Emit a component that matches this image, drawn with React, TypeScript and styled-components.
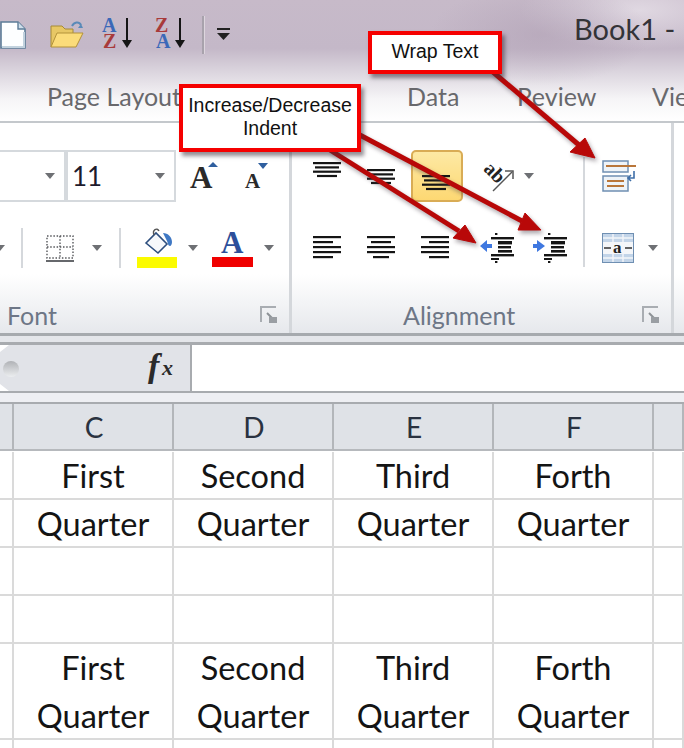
import React from "react";
import styled, { createGlobalStyle } from "styled-components";

const Global = createGlobalStyle`
  html, body { margin: 0; padding: 0; background: #fff; }
`;

const Page = styled.div`
  position: relative;
  width: 684px;
  height: 748px;
  overflow: hidden;
  background: #fff;
  font-family: Lato, "Open Sans", sans-serif;
`;

const TitleArea = styled.header`
  height: 123px;
  box-sizing: border-box;
  border-bottom: 2px solid #c4c8cc;
  display: flex;
  flex-direction: column;
  background:
    radial-gradient(ellipse 110px 50px at 540px 35px, rgba(176, 160, 180, 0.55), rgba(176, 160, 180, 0) 100%),
    radial-gradient(ellipse 120px 40px at 640px 10px, rgba(232, 226, 234, 0.75), rgba(232, 226, 234, 0) 100%),
    linear-gradient(180deg, #c7bac9 0%, #c4b8c8 40%, #dcd6df 60%, #f6f5f7 82%, #ffffff 100%);
`;

const QuickBar = styled.div`
  height: 76px;
  display: flex;
  align-items: flex-start;
  padding-top: 18px;
  box-sizing: border-box;
`;

const QuickSlot = styled.div<{ $w: number; $top?: number }>`
  width: ${(p) => p.$w}px;
  flex: none;
  display: flex;
  justify-content: flex-start;
  padding-top: ${(p) => p.$top ?? 0}px;
`;

const QuickDivider = styled.div`
  width: 3px;
  height: 38px;
  margin: -2px 11px 0 0;
  background: #a8a2ac;
  border-right: 1px solid #ddd6de;
  box-sizing: border-box;
`;

const BookTitle = styled.div`
  margin-left: 342px;
  margin-top: -5px;
  font-size: 29px;
  line-height: 32px;
  color: #333338;
  white-space: nowrap;
  font-family: Lato, sans-serif;
`;

const TabRow = styled.nav`
  display: flex;
  padding-left: 47px;
  height: 40px;
  align-items: center;
`;

const Tab = styled.div<{ $w: number }>`
  width: ${(p) => p.$w}px;
  flex: none;
  font-size: 25px;
  line-height: 30px;
  color: #68686c;
  white-space: nowrap;
  overflow: visible;
`;

const Ribbon = styled.section`
  height: 213px;
  display: flex;
  background: linear-gradient(180deg, #ffffff 0%, #ffffff 72%, #e6e8ec 100%);
  border-bottom: 3px solid #a6aaae;
  box-sizing: border-box;
`;

const Group = styled.div<{ $w: number }>`
  width: ${(p) => p.$w}px;
  flex: none;
  box-sizing: border-box;
  border-right: 3px solid #d4d7db;
  display: flex;
  flex-direction: column;
  padding-top: 27px;
`;

const ToolRow = styled.div`
  display: flex;
  align-items: center;
  height: 52px;
  flex: none;
`;

const RowGap = styled.div`
  height: 20px;
  flex: none;
`;

const AlignBody = styled.div`
  display: flex;
  align-items: center;
`;

const ToolColumn = styled.div<{ $w: number }>`
  width: ${(p) => p.$w}px;
  flex: none;
  display: flex;
  flex-direction: column;
`;

const Combo = styled.div<{ $w: number; $noLeft?: boolean }>`
  width: ${(p) => p.$w}px;
  height: 52px;
  box-sizing: border-box;
  border: 2px solid #d5d9dd;
  border-left-width: ${(p) => (p.$noLeft ? 0 : 2)}px;
  display: flex;
  align-items: center;
  justify-content: space-between;
  padding: 0 9px 0 4px;
  font-size: 26px;
  color: #1d1a2c;
  flex: none;
`;

const Slot = styled.div<{ $w: number; $top?: number }>`
  width: ${(p) => p.$w}px;
  height: 52px;
  flex: none;
  display: flex;
  align-items: ${(p) => (p.$top !== undefined ? "flex-start" : "center")};
  padding-top: ${(p) => p.$top ?? 0}px;
  justify-content: center;
  box-sizing: border-box;
`;

const VSep = styled.div<{ $h?: number }>`
  width: 2px;
  height: ${(p) => p.$h ?? 40}px;
  background: #d5d8dc;
  flex: none;
`;

const Caret = styled.span<{ $clip?: number }>`
  width: 0;
  height: 0;
  flex: none;
  margin-left: ${(p) => (p.$clip ? -p.$clip : 0)}px;
  border-left: 5px solid transparent;
  border-right: 5px solid transparent;
  border-top: 6px solid #6e7074;
`;

const GroupFooter = styled.div`
  margin-top: auto;
  height: 36px;
  padding: 0 11px 0 7px;
  display: flex;
  align-items: center;
  justify-content: space-between;
  font-size: 25px;
  color: #6d7686;
`;

const AlignLabel = styled.span`
  margin-left: 104px;
`;

const HighlightButton = styled.div`
  width: 52px;
  height: 52px;
  flex: none;
  box-sizing: border-box;
  border: 2px solid #d9ac55;
  border-radius: 5px;
  background: linear-gradient(180deg, #fde9a4 0%, #fdd873 100%);
  display: flex;
  align-items: flex-start;
  justify-content: center;
  padding-top: 23px;
`;

const FormulaGap = styled.div`
  height: 6px;
  background: #e4e6ea;
  border-bottom: 3px solid #a8abaf;
`;

const FormulaBar = styled.div`
  height: 48px;
  display: flex;
  box-sizing: border-box;
  border-bottom: 2px solid #a8abaf;
`;

const NameEnd = styled.div`
  width: 192px;
  flex: none;
  box-sizing: border-box;
  background: #e1e3e8;
  border-right: 2px solid #a8abaf;
  display: flex;
  align-items: center;
  justify-content: space-between;
  padding: 0 12px 0 0;
`;

const FormulaInput = styled.div`
  flex: 1;
  background: #fff;
`;

const SheetGap = styled.div`
  height: 9px;
  background: #eeeff3;
  border-bottom: 2px solid #a8abaf;
`;

const Sheet = styled.div`
  display: grid;
  grid-template-columns: 14px repeat(4, 160px) 1fr;
  grid-auto-rows: 48px;
`;

const HeadCell = styled.div`
  box-sizing: border-box;
  background: #dfe2e7;
  border-right: 2px solid #b3b6ba;
  border-bottom: 2px solid #b6b9bd;
  display: flex;
  align-items: center;
  justify-content: center;
  padding-left: 2px;
  font-size: 28px;
  color: #2a3240;
  height: 47px;
`;

const Cell = styled.div<{ $span?: number }>`
  box-sizing: border-box;
  grid-row: span ${(p) => p.$span ?? 1};
  border-right: 2px solid #dadada;
  border-bottom: 2px solid #dadada;
  font-size: 32.5px;
  line-height: 48px;
  color: #141414;
  text-align: center;
  white-space: pre-line;
  min-width: 0;
`;

const Callout = styled.div<{ $x: number; $y: number; $w: number; $h: number }>`
  position: absolute;
  left: ${(p) => p.$x}px;
  top: ${(p) => p.$y}px;
  width: ${(p) => p.$w}px;
  height: ${(p) => p.$h}px;
  box-sizing: border-box;
  border: 4px solid #f50000;
  background: #fff;
  box-shadow: 3px 4px 4px rgba(60, 50, 60, 0.55);
  font-family: "Liberation Sans", Arial, sans-serif;
  font-size: 19.5px;
  line-height: 23px;
  color: #111;
  text-align: center;
  display: flex;
  align-items: center;
  justify-content: center;
  padding-bottom: 3px;
`;

const ArrowLayer = styled.svg`
  position: absolute;
  left: 0;
  top: 0;
  filter: drop-shadow(2px 3px 2px rgba(70, 60, 70, 0.45));
  pointer-events: none;
`;

const Icon = styled.svg`
  display: block;
  flex: none;
  overflow: visible;
`;

const Lines = ({ rows, gap }: { rows: [number, number][]; gap: number }) => (
  <Icon width="30" height={rows.length * gap} viewBox={`0 0 30 ${rows.length * gap}`}>
    {rows.map(([a, b], i) => (
      <rect key={i} x={a} y={i * gap} width={b - a} height="2.2" fill="#151515" />
    ))}
  </Icon>
);

const DocIcon = () => (
  <Icon width="26" height="30" viewBox="0 0 26 30">
    <path d="M1 2h17l7 7v19H1z" fill="#fdfeff" stroke="#5c7c98" strokeWidth="1.6" />
    <path d="M18 2v7h7" fill="#cfdeea" stroke="#5c7c98" strokeWidth="1.4" />
    <path d="M2 27h22V12" fill="none" stroke="#c2d2de" strokeWidth="2" />
  </Icon>
);

const FolderIcon = () => (
  <Icon width="34" height="28" viewBox="0 0 34 28">
    <path d="M1 27V6h11l3 3h8v5" fill="#e7c765" stroke="#a58a38" />
    <path d="M1 27l6-14h26l-7 14z" fill="#fbdc7a" stroke="#b3923a" />
    <path d="M22 6c2-4 7-5 9-1" fill="none" stroke="#5a8ab8" strokeWidth="2" />
    <path d="M33 8l-5 0 3-4z" fill="#5a8ab8" />
  </Icon>
);

const SortIcon = ({ top, bottom, topColor, bottomColor }: { top: string; bottom: string; topColor: string; bottomColor: string }) => (
  <Icon width="34" height="32" viewBox="0 0 34 32">
    <text x="0" y="14" fontFamily="Liberation Serif, serif" fontWeight="700" fontSize="20" fill={topColor}>{top}</text>
    <text x="1" y="30" fontFamily="Liberation Serif, serif" fontWeight="700" fontSize="20" fill={bottomColor}>{bottom}</text>
    <path d="M25 0v24" stroke="#151515" strokeWidth="2" />
    <path d="M20 22h10l-5 8z" fill="#151515" />
  </Icon>
);

const CustomizeIcon = () => (
  <Icon width="16" height="14" viewBox="0 0 16 14">
    <rect x="1" y="0" width="13" height="2" fill="#222" />
    <path d="M1 5h13l-6.5 7z" fill="#222" />
  </Icon>
);

const GrowIcon = () => (
  <Icon width="32" height="32" viewBox="0 0 32 32">
    <text x="0" y="28" fontFamily="Liberation Serif, serif" fontWeight="700" fontSize="31" fill="#2a2a2a">A</text>
    <path d="M18 7h10l-5-5z" fill="#2f5f9f" />
  </Icon>
);

const ShrinkIcon = () => (
  <Icon width="32" height="32" viewBox="0 0 32 32">
    <text x="2" y="28" fontFamily="Liberation Serif, serif" fontWeight="700" fontSize="21" fill="#2a2a2a">A</text>
    <path d="M15 3h10l-5 6z" fill="#2f5f9f" />
  </Icon>
);

const BordersIcon = () => (
  <Icon width="28" height="27" viewBox="0 0 28 27">
    <rect x="1" y="1" width="26" height="22" fill="none" stroke="#55575b" strokeWidth="1.4" strokeDasharray="1.5 1.7" />
    <path d="M14 1v22M1 12h26" stroke="#55575b" strokeWidth="1.4" strokeDasharray="1.5 1.7" />
    <rect x="0" y="25" width="28" height="2" fill="#66686c" />
  </Icon>
);

const FillIcon = () => (
  <Icon width="40" height="42" viewBox="0 0 40 42">
    <path d="M9 16L19 6l11 11-9 9z" fill="#f6f8fb" stroke="#2d4e7e" strokeWidth="1.6" />
    <path d="M17 8c-2-5 3-8 5-4" fill="none" stroke="#555" strokeWidth="1.4" />
    <path d="M26 6c5 0 9 4 9 9 0 2-1 4-2 4-2 0-2-3-3-5z" fill="#3f78c4" />
    <rect x="0" y="30" width="40" height="11" fill="#fbfb00" />
  </Icon>
);

const FontColorIcon = () => (
  <Icon width="41" height="42" viewBox="0 0 41 42">
    <text x="9" y="26" fontFamily="Liberation Serif, serif" fontWeight="700" fontSize="31" fill="#2d4f9a">A</text>
    <rect x="0" y="30" width="41" height="10" fill="#f00000" />
  </Icon>
);

const OrientationIcon = () => (
  <Icon width="32" height="32" viewBox="0 0 32 32">
    <g transform="rotate(45 12 14)">
      <text x="1" y="19" fontFamily="Liberation Serif, serif" fontWeight="700" fontSize="20" fill="#222">ab</text>
    </g>
    <path d="M11 31L30 12" stroke="#555" strokeWidth="1.5" />
    <path d="M23 11h8v8" fill="none" stroke="#555" strokeWidth="1.5" />
  </Icon>
);

const IndentIcon = ({ increase }: { increase: boolean }) => (
  <Icon width="34" height="30" viewBox="0 0 34 30">
    <g fill="#151515">
      <rect x="15" y="0" width="2.4" height="2" />
      <rect x="11" y="4" width="23" height="2.4" />
      <rect x="18" y="8" width="14" height="3.4" />
      <rect x="18" y="13" width="13" height="2.4" />
      <rect x="18" y="17" width="14" height="2.6" />
      <rect x="11" y="21" width="23" height="2.4" />
      <rect x="11" y="25" width="8" height="2" />
      <rect x="15" y="28" width="2.4" height="2" />
    </g>
    {increase ? (
      <path d="M0 11h4V7l8 6-8 6v-4H0z" fill="#3f78e0" />
    ) : (
      <path d="M12 11H7V7l-7 6 7 6v-4h5z" fill="#3f78e0" />
    )}
  </Icon>
);

const WrapIcon = () => (
  <Icon width="34" height="32" viewBox="0 0 34 32">
    <rect x="1" y="1" width="25" height="11" fill="#eef3f8" stroke="#6f8fb2" strokeWidth="1.5" />
    <rect x="1" y="16" width="25" height="15" fill="#eef3f8" stroke="#6f8fb2" strokeWidth="1.5" />
    <path d="M4 6h30" stroke="#b9763a" strokeWidth="2" />
    <path d="M5 21h17M5 26h17" stroke="#b9763a" strokeWidth="2" />
    <path d="M32 11v7h-5M29 15l-3 3 3 3" fill="none" stroke="#3f6fa8" strokeWidth="1.6" />
  </Icon>
);

const MergeIcon = () => (
  <Icon width="32" height="30" viewBox="0 0 32 30">
    <rect x="0.5" y="0.5" width="31" height="29" fill="#c2d4e8" stroke="#6f8fb2" />
    <rect x="1" y="9" width="30" height="12" fill="#f4f6f9" />
    <path d="M1 5h30M1 25h30M11 1v8M21 1v8M11 21v8M21 21v8" stroke="#f4f6f9" strokeWidth="1.4" />
    <text x="11" y="20" fontFamily="Liberation Serif, serif" fontWeight="700" fontSize="17" fill="#222">a</text>
    <path d="M2 15h7M30 15h-7" stroke="#333" strokeWidth="1.5" />
  </Icon>
);

const NameHandle = () => (
  <Icon width="24" height="46" viewBox="0 0 24 46">
    <defs>
      <linearGradient id="handleDot" x1="0" y1="0" x2="0" y2="1">
        <stop offset="0" stopColor="#b0b2b6" />
        <stop offset="1" stopColor="#eceef0" />
      </linearGradient>
    </defs>
    <path d="M0 0h9L0 7zM0 46h9L0 39z" fill="#fff" />
    <circle cx="11" cy="24" r="8" fill="url(#handleDot)" />
  </Icon>
);

const FxIcon = () => (
  <Icon width="30" height="34" viewBox="0 0 30 34">
    <text x="0" y="26" fontFamily="Liberation Serif, serif" fontStyle="italic" fontWeight="700" fontSize="34" fill="#2b2b2b">f</text>
    <text x="14" y="24" fontFamily="Liberation Serif, serif" fontStyle="italic" fontWeight="700" fontSize="22" fill="#2b2b2b">x</text>
  </Icon>
);

const Launcher = () => (
  <Icon width="18" height="18" viewBox="0 0 18 18">
    <path d="M1 16V1h15" fill="none" stroke="#a9adb2" strokeWidth="2" />
    <path d="M7 7l8 8" stroke="#8d9196" strokeWidth="2" />
    <rect x="9" y="11" width="8" height="6" fill="#9a9ea3" />
  </Icon>
);

const Arrows = () => (
  <ArrowLayer width="684" height="748" viewBox="0 0 684 748">
    <g fill="#b80808" stroke="#b80808">
      <path d="M493 72L579 145" strokeWidth="5" fill="none" />
      <path d="M570 152L585 138L595 158Z" strokeWidth="1" />
      <path d="M330 150L459 231" strokeWidth="5" fill="none" />
      <path d="M453 238L465 225L476 243Z" strokeWidth="1" />
      <path d="M358 134L522 221" strokeWidth="5" fill="none" />
      <path d="M518 230L525 213L541 230Z" strokeWidth="1" />
    </g>
  </ArrowLayer>
);

const headers = ["", "C", "D", "E", "F", ""];
const q = "Quarter";
const sheetRows: { cells: string[]; span?: number }[] = [
  { cells: ["First", "Second", "Third", "Forth"] },
  { cells: [q, q, q, q] },
  { cells: ["", "", "", ""] },
  { cells: ["", "", "", ""] },
  { cells: [`First\n${q}`, `Second\n${q}`, `Third\n${q}`, `Forth\n${q}`], span: 2 },
  { cells: ["", "", "", ""] },
];

const stacked: [number, number][] = [[0, 28], [2, 26], [0, 28], [4, 24]];

export default function App() {
  return (
    <Page>
      <Global />
      <TitleArea>
        <QuickBar>
          <QuickSlot $w={50} $top={2}><DocIcon /></QuickSlot>
          <QuickSlot $w={52} $top={2}><FolderIcon /></QuickSlot>
          <QuickSlot $w={53}><SortIcon top="A" bottom="Z" topColor="#3a68b8" bottomColor="#a83a3a" /></QuickSlot>
          <QuickSlot $w={47}><SortIcon top="Z" bottom="A" topColor="#a83a3a" bottomColor="#3a68b8" /></QuickSlot>
          <QuickDivider />
          <QuickSlot $w={16} $top={10}><CustomizeIcon /></QuickSlot>
          <BookTitle>Book1 -</BookTitle>
        </QuickBar>
        <TabRow>
          <Tab $w={360}>Page Layout</Tab>
          <Tab $w={110}>Data</Tab>
          <Tab $w={135}>Review</Tab>
          <Tab $w={32}>View</Tab>
        </TabRow>
      </TitleArea>
      <Ribbon>
        <Group $w={292}>
          <ToolRow>
            <Combo $w={66} $noLeft><span /><Caret /></Combo>
            <Combo $w={110}>11<Caret /></Combo>
            <Slot $w={14} />
            <GrowIcon />
            <Slot $w={21} />
            <ShrinkIcon />
          </ToolRow>
          <RowGap />
          <ToolRow>
            <Caret $clip={5} />
            <Slot $w={16} />
            <VSep />
            <Slot $w={23} />
            <BordersIcon />
            <Slot $w={18} />
            <Caret />
            <Slot $w={17} />
            <VSep />
            <Slot $w={16} />
            <FillIcon />
            <Slot $w={11} />
            <Caret />
            <Slot $w={14} />
            <FontColorIcon />
            <Slot $w={11} />
            <Caret />
          </ToolRow>
          <GroupFooter>Font<Launcher /></GroupFooter>
        </Group>
        <Group $w={382}>
          <AlignBody>
            <ToolColumn $w={291}>
              <ToolRow>
                <Slot $w={9} />
                <Slot $w={54} $top={12}><Lines rows={stacked} gap={4.3} /></Slot>
                <Slot $w={54} $top={19}><Lines rows={stacked} gap={4.3} /></Slot>
                <Slot $w={2} />
                <HighlightButton><Lines rows={stacked} gap={4.3} /></HighlightButton>
                <Slot $w={19} />
                <OrientationIcon />
                <Slot $w={10} />
                <Caret />
              </ToolRow>
              <RowGap />
              <ToolRow>
                <Slot $w={9} />
                <Slot $w={54}><Lines rows={[[0, 28], [0, 20], [0, 28], [0, 28], [0, 20]]} gap={5} /></Slot>
                <Slot $w={54}><Lines rows={[[0, 28], [4, 24], [0, 28], [0, 28], [6, 22]]} gap={5} /></Slot>
                <Slot $w={54}><Lines rows={[[0, 28], [8, 28], [0, 28], [0, 28], [8, 28]]} gap={5} /></Slot>
                <Slot $w={17} />
                <IndentIcon increase={false} />
                <Slot $w={19} />
                <IndentIcon increase />
              </ToolRow>
            </ToolColumn>
            <VSep $h={110} />
            <ToolColumn $w={80}>
              <ToolRow>
                <Slot $w={17} />
                <WrapIcon />
              </ToolRow>
              <RowGap />
              <ToolRow>
                <Slot $w={17} />
                <MergeIcon />
                <Slot $w={14} />
                <Caret />
              </ToolRow>
            </ToolColumn>
          </AlignBody>
          <GroupFooter><AlignLabel>Alignment</AlignLabel><Launcher /></GroupFooter>
        </Group>
      </Ribbon>
      <FormulaGap />
      <FormulaBar>
        <NameEnd><NameHandle /><FxIcon /></NameEnd>
        <FormulaInput />
      </FormulaBar>
      <SheetGap />
      <Sheet>
        {headers.map((h, i) => <HeadCell key={i}>{h}</HeadCell>)}
        {sheetRows.flatMap((row, r) => [
          <Cell key={`${r}-s`} $span={row.span} />,
          ...row.cells.map((t, c) => <Cell key={`${r}-${c}`} $span={row.span}>{t}</Cell>),
          <Cell key={`${r}-e`} $span={row.span} />,
        ])}
      </Sheet>
      <Arrows />
      <Callout $x={368} $y={31} $w={134} $h={43}>Wrap Text</Callout>
      <Callout $x={179} $y={84} $w={182} $h={68}>Increase/Decrease<br />Indent</Callout>
    </Page>
  );
}
